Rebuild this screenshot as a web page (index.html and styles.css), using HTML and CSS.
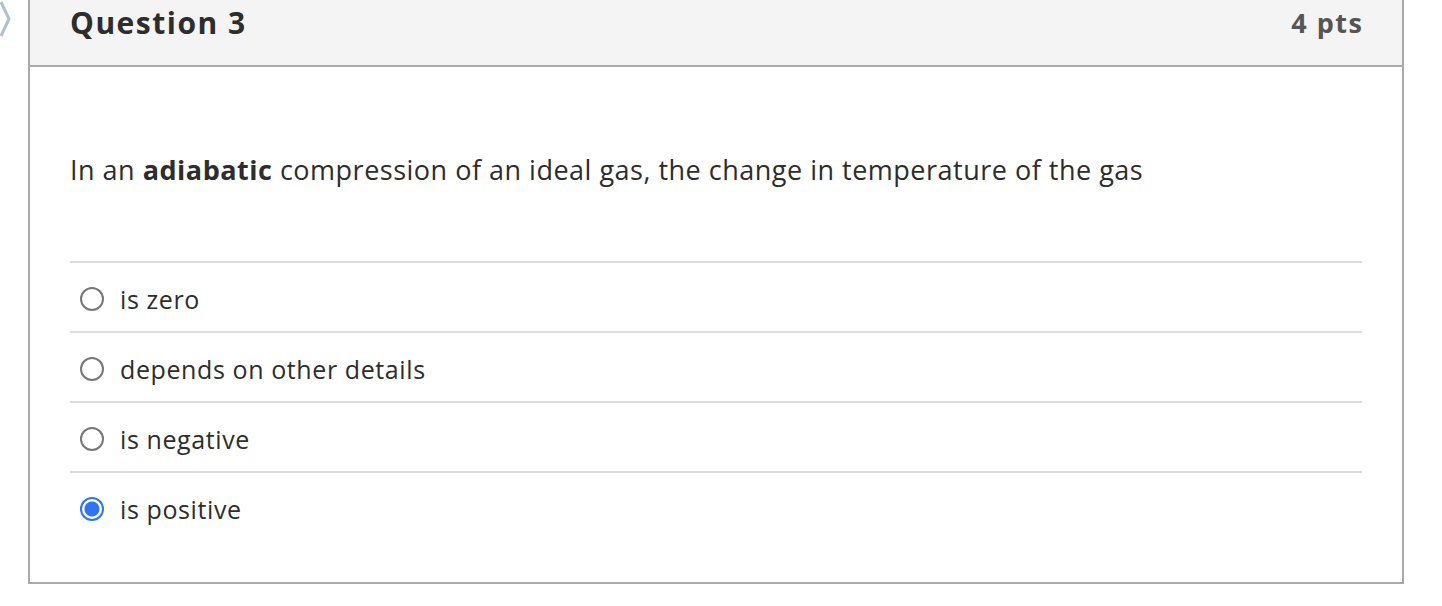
FILE: index.html
```html
<!DOCTYPE html>
<html>
<head>
<meta charset="utf-8">
<link rel="stylesheet" href="styles.css">
</head>
<body>
<div class="page">
  <div class="gutter">
    <svg class="chev" width="12" height="38" viewBox="0 0 12 38"><path d="M1 2 L9 19 L1 36" fill="none" stroke="#b0c2d2" stroke-width="3"/></svg>
  </div>
  <div class="question">
    <div class="q-header">
      <span class="q-title">Question 3</span>
      <span class="q-pts">4 pts</span>
    </div>
    <div class="q-body">
      <p class="q-text">In an <strong>adiabatic</strong> compression of an ideal gas, the change in temperature of the gas</p>
      <div class="answers">
        <label class="answer"><span class="radio"></span><span class="a-text">is zero</span></label>
        <label class="answer"><span class="radio"></span><span class="a-text">depends on other details</span></label>
        <label class="answer"><span class="radio"></span><span class="a-text">is negative</span></label>
        <label class="answer"><span class="radio checked"></span><span class="a-text">is positive</span></label>
      </div>
    </div>
  </div>
</div>
</body>
</html>
```
FILE: styles.css
```css
html, body { margin: 0; padding: 0; background: #fff; }
body { font-family: "Open Sans", "Noto Sans", sans-serif; color: #2d2d2d; }
.page { display: flex; align-items: flex-start; }
.gutter { width: 28px; flex: none; }
.chev { display: block; margin-top: 0; }
.question {
  width: 1372px;
  border: 2px solid #a9a9a9;
  border-top: none;
}
.q-header {
  height: 67px;
  background: #f4f4f4;
  border-bottom: 2px solid #a9a9a9;
  display: flex;
  justify-content: space-between;
  align-items: flex-start;
  padding: 0 40px;
  box-sizing: border-box;
}
.q-title { font-size: 30px; font-weight: 700; line-height: 46px; color: #2d2d2d; letter-spacing: 1.5px; }
.q-pts { font-size: 27px; font-weight: 700; line-height: 46px; color: #555; letter-spacing: 1.5px; margin-right: -1.5px; }
.q-body { padding: 85px 40px 41px; }
.q-text { margin: 0 0 73px; font-size: 27px; line-height: 36px; letter-spacing: 0.5px; }
.q-text strong { font-weight: 700; }
.answer {
  display: flex;
  align-items: center;
  height: 70px;
  border-top: 2px solid #ddd;
  box-sizing: border-box;
  padding-left: 10px;
  padding-top: 3px;
}
.radio {
  width: 24px; height: 24px;
  border: 2px solid #777;
  border-radius: 50%;
  box-sizing: border-box;
  margin-right: 16px;
  flex: none;
}
.radio.checked {
  border-color: #2f74f2;
  background: radial-gradient(circle, #2f74f2 0 7px, #fff 8px);
}
.a-text { font-size: 25px; letter-spacing: 0.6px; }
```
